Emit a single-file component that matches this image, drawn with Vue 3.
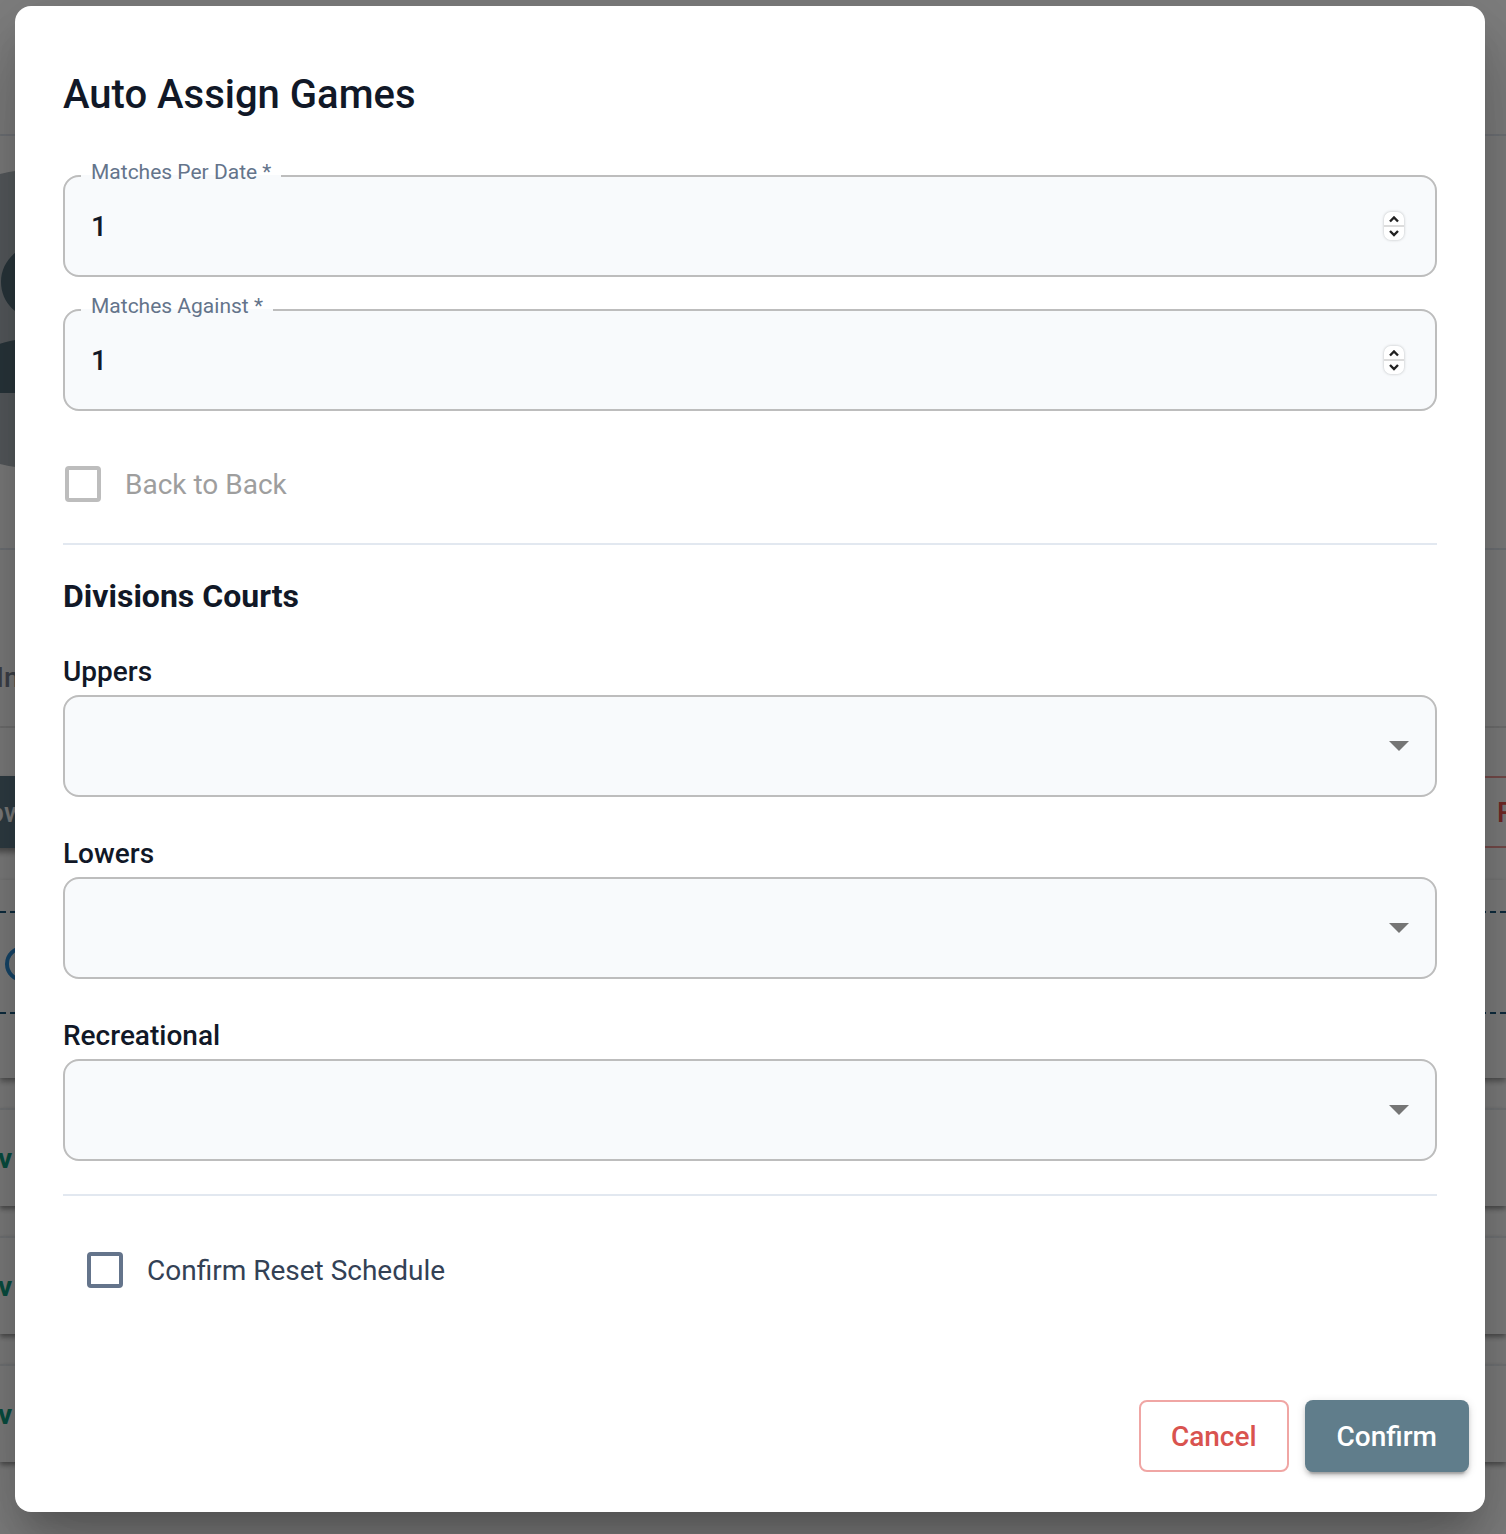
<script setup>
import { ref } from 'vue'

const numberFields = ref([
  { id: 'matches-per-date', label: 'Matches Per Date', value: 1 },
  { id: 'matches-against', label: 'Matches Against', value: 1 },
])

const divisions = ref([
  { id: 'uppers', name: 'Uppers', court: '' },
  { id: 'lowers', name: 'Lowers', court: '' },
  { id: 'recreational', name: 'Recreational', court: '' },
])

const backToBack = ref(false)
const confirmReset = ref(false)
</script>

<template>
  <div class="screen">
    <div class="page" aria-hidden="true">
      <div class="page-top"></div>
      <div class="page-profile">
        <div class="avatar">
          <svg viewBox="0 0 24 24" width="222" height="222">
            <path d="M12 12c2.21 0 4-1.79 4-4s-1.79-4-4-4-4 1.79-4 4 1.79 4 4 4zm0 2c-2.67 0-8 1.34-8 4v2h16v-2c0-2.66-5.33-4-8-4z" />
          </svg>
        </div>
      </div>
      <div class="page-tabs">In</div>
      <div class="page-toolbar">
        <div class="tool filled">ow</div>
        <div class="tool outlined">R</div>
      </div>
      <div class="page-notice">
        <div class="notice-box">
          <svg viewBox="0 0 40 40" width="40" height="40">
            <circle cx="20" cy="20" r="16" fill="none" stroke="#2f8fd8" stroke-width="4" />
          </svg>
        </div>
      </div>
      <div v-for="n in 3" :key="n" class="page-card">v</div>
    </div>

    <div class="overlay">
      <form class="dialog" role="dialog" aria-modal="true" aria-labelledby="dialog-title" @submit.prevent>
        <div class="content">
          <h1 id="dialog-title">Auto Assign Games</h1>

          <fieldset v-for="field in numberFields" :key="field.id" class="number-field">
            <legend><label :for="field.id">{{ field.label }} *</label></legend>
            <div class="number-row">
              <input :id="field.id" v-model="field.value" type="number" min="1" required />
              <svg class="spinner" viewBox="0 0 20 28" width="20" height="28">
                <rect width="20" height="28" rx="7" fill="#fff" />
                <path d="M0 14H20" stroke="#dcdcdc" stroke-width="2" />
                <path d="M6 9.500L10 5.500L14 9.500M6 19L10 23L14 19" fill="none" stroke="#222" stroke-width="2.400" />
              </svg>
            </div>
          </fieldset>

          <label class="check disabled">
            <input v-model="backToBack" type="checkbox" disabled />
            <span>Back to Back</span>
          </label>

          <hr />

          <h2>Divisions Courts</h2>
          <div v-for="division in divisions" :key="division.id" class="division">
            <label :for="division.id">{{ division.name }}</label>
            <div class="select-wrap">
              <select :id="division.id" v-model="division.court">
                <option value=""></option>
              </select>
              <svg class="arrow" viewBox="0 0 20 10" width="20" height="10">
                <path d="M0 0H20L10 10Z" fill="#757575" />
              </svg>
            </div>
          </div>

          <hr class="last" />

          <label class="check reset">
            <input v-model="confirmReset" type="checkbox" />
            <span>Confirm Reset Schedule</span>
          </label>
        </div>

        <div class="actions">
          <button type="button" class="cancel">Cancel</button>
          <button type="submit" class="confirm">Confirm</button>
        </div>
      </form>
    </div>
  </div>
</template>

<style>
body {
  margin: 0;
}
</style>

<style scoped>
.screen,
.screen * {
  box-sizing: border-box;
}

.screen {
  position: relative;
  overflow: hidden;
  font-family: Roboto, "Liberation Sans", sans-serif;
  font-size: 28px;
  color: #111827;
}

/* Schedule page under the dialog */
.page {
  position: absolute;
  inset: 0;
  background: #fff;
}

.page-top {
  height: 136px;
  border-bottom: 2px solid #e2e8f0;
}

.page-profile {
  height: 414px;
  padding-top: 33px;
  border-bottom: 2px solid #e2e8f0;
}

.avatar {
  display: flex;
  align-items: center;
  justify-content: center;
  width: 300px;
  height: 300px;
  margin-left: -112px;
  border-radius: 50%;
  background: #b0b8be;
}

.avatar svg {
  fill: #546e7a;
}

.page-tabs {
  height: 178px;
  padding-top: 108px;
  border-bottom: 2px solid #e5e5e5;
  margin-left: -4px;
  line-height: 40px;
  font-weight: 500;
  color: #7c8594;
}

.page-toolbar {
  display: flex;
  justify-content: space-between;
  padding-top: 48px;
}

.tool {
  height: 72px;
  line-height: 74px;
  font-weight: 500;
}

.tool.filled {
  width: 80px;
  margin-left: -12px;
  background: #607d8b;
  color: #fff;
  box-shadow: 0 4px 6px rgba(0, 0, 0, 0.4);
}

.tool.outlined {
  width: 80px;
  margin-right: -48px;
  padding-left: 21px;
  border: 2px solid #f09a98;
  line-height: 70px;
  color: #e8524e;
}

.page-notice {
  height: 198px;
  margin-top: 32px;
  padding: 31px 0;
  box-shadow: 0 3px 6px rgba(0, 0, 0, 0.4);
}

.notice-box {
  height: 103px;
  padding: 31px 3px;
  border: 2px dashed #1d5a80;
  border-width: 2px 0;
}

.page-card {
  height: 98px;
  margin-top: 30px;
  line-height: 98px;
  text-indent: -2px;
  font-weight: 700;
  font-size: 28px;
  color: #12a184;
  border-top: 2px solid #e8ecf0;
  box-shadow: 0 3px 5px rgba(0, 0, 0, 0.4);
}

.overlay {
  position: relative;
  min-height: 100vh;
  padding: 6px 21px 22px 15px;
  background: rgba(0, 0, 0, 0.5);
}

.dialog {
  border-radius: 16px;
  background: #fff;
  box-shadow:
    0 22px 30px -14px rgba(0, 0, 0, 0.2),
    0 48px 76px 6px rgba(0, 0, 0, 0.14),
    0 18px 92px 16px rgba(0, 0, 0, 0.12);
}

.content {
  padding: 59px 48px 0;
}

h1 {
  margin: 0 0 35px;
  font-size: 40px;
  font-weight: 500;
  line-height: 60px;
}

.number-field {
  min-width: 0;
  margin: 0 0 17px;
  padding: 0 16px 15px;
  border: 2px solid #bdbdbd;
  border-radius: 16px;
  background: #f8fafc;
}

legend {
  padding: 0 10px 8px;
  font-size: 21px;
  line-height: 24px;
  color: #64748b;
}

.number-row {
  display: flex;
  align-items: center;
  padding: 0 15px 0 10px;
}

.number-row input {
  flex: 1;
  min-width: 0;
  height: 68px;
  padding: 0;
  border: 0;
  outline: 0;
  background: transparent;
  font: inherit;
  font-weight: 500;
  color: inherit;
  appearance: textfield;
}

.spinner {
  border-radius: 7px;
  box-shadow: 0 0 3px rgba(0, 0, 0, 0.25);
}

.check {
  display: flex;
  align-items: flex-start;
  gap: 24px;
  line-height: 38px;
  color: #334155;
}

.check input {
  width: 36px;
  height: 36px;
  margin: 0;
  border: 4px solid #64748b;
  border-radius: 4px;
  appearance: none;
}

.check.disabled {
  margin: 55px 2px 0;
  color: #9e9e9e;
}

.check.disabled input {
  border-color: #bdbdbd;
}

.check.reset {
  margin: 56px 24px 0;
}

hr {
  height: 2px;
  margin: 39px 0 32px;
  border: 0;
  background: #e2e8f0;
}

hr.last {
  margin: 33px 0 0;
}

h2 {
  margin: 0;
  font-size: 32px;
  font-weight: 700;
  line-height: 38px;
}

.division {
  display: flex;
  flex-direction: column;
  gap: 3px;
  margin-top: 37px;
  font-weight: 500;
  line-height: 40px;
}

.select-wrap {
  position: relative;
}

select {
  display: block;
  width: 100%;
  height: 102px;
  padding: 0 64px 0 26px;
  border: 2px solid #bdbdbd;
  border-radius: 16px;
  background: #f8fafc;
  font: inherit;
  color: inherit;
  appearance: none;
}

.arrow {
  position: absolute;
  top: 46px;
  right: 28px;
  pointer-events: none;
}

.actions {
  display: flex;
  justify-content: flex-end;
  gap: 16px;
  padding: 110px 16px 40px;
}

button {
  height: 72px;
  padding: 0 32px;
  border: 0;
  border-radius: 8px;
  font: inherit;
  font-weight: 500;
}

.cancel {
  padding: 0 30px;
  border: 2px solid #f0a6a4;
  background: #fff;
  color: #d9534f;
}

.confirm {
  background: #607d8b;
  color: #fff;
  box-shadow:
    0 6px 2px -4px rgba(0, 0, 0, 0.2),
    0 4px 4px rgba(0, 0, 0, 0.14),
    0 2px 10px rgba(0, 0, 0, 0.12);
}
</style>
